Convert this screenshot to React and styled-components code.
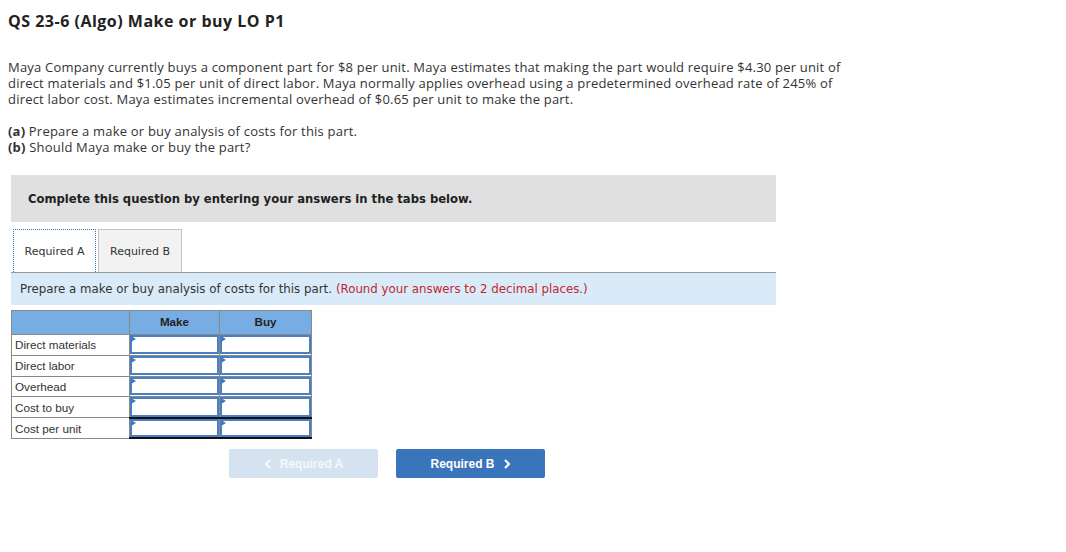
import React from "react";
import styled, { createGlobalStyle } from "styled-components";

const Global = createGlobalStyle`
  body { margin: 0; background: #fff; }
  * { box-sizing: border-box; }
`;

const Page = styled.div`
  padding: 11px 8px 40px 8px;
  font-family: "Open Sans", "Liberation Sans", sans-serif;
  color: #333;
  width: 1066px;
`;

const Title = styled.h1`
  margin: 0;
  font-size: 16px;
  letter-spacing: 0.5px;
  font-weight: 700;
  color: #222;
  line-height: 20px;
`;

const Para = styled.p`
  margin: ${(p) => p.$top || 0}px 0 0 0;
  font-size: 13px;
  letter-spacing: 0.2px;
  line-height: 16px;
  white-space: nowrap;
`;

const Bold = styled.b`
  font-weight: 700;
`;

const Section = styled.div`
  margin: 20px 0 0 3px;
  width: 765px;
  font-family: Verdana, "DejaVu Sans", sans-serif;
`;

const Banner = styled.div`
  background: #e0e0e0;
  height: 47px;
  display: flex;
  align-items: center;
  padding-left: 17px;
  font-size: 11.6px;
  font-weight: 700;
  color: #222;
`;

const Tabs = styled.div`
  display: flex;
  gap: 2px;
  margin-top: 7px;
  padding-left: 2px;
  border-bottom: 1px solid #999;
`;

const Tab = styled.div`
  width: ${(p) => p.$w}px;
  height: 43px;
  display: flex;
  align-items: center;
  justify-content: center;
  font-size: 11px;
  color: #333;
  background: ${(p) => (p.$active ? "#fff" : "#f2f2f2")};
  border: 1px ${(p) => (p.$active ? "dotted #3a6fb5" : "solid #c4c4c4")};
  border-bottom: none;
  margin-bottom: ${(p) => (p.$active ? "-1px" : "0")};
`;

const Instr = styled.div`
  background: #d9ebf9;
  height: 32px;
  display: flex;
  align-items: center;
  padding-left: 9px;
  font-size: 11.8px;
  color: #333;
`;

const Red = styled.span`
  color: #c4262e;
  margin-left: 4px;
`;

const Table = styled.table`
  margin-top: 5px;
  border-collapse: collapse;
  font-family: Arial, "Liberation Sans", sans-serif;
  font-size: 11.7px;
  color: #222;
`;

const Th = styled.th`
  background: #78ade4;
  border: 1px solid #888;
  height: 24px;
  width: ${(p) => p.$w}px;
  font-weight: 700;
  padding: 0 0 2px 0;
  color: #222;
  text-align: center;
`;

const Label = styled.td`
  border: 1px solid #888;
  height: 20.8px;
  padding: 0 3px;
  white-space: nowrap;
  color: #333;
`;

const InputCell = styled.td`
  border: 1px solid #888;
  border-bottom: ${(p) => (p.$total ? "2px solid #111" : "1px solid #888")};
  padding: 0;
  height: 20.8px;
  position: relative;
`;

const Field = styled.div`
  position: absolute;
  inset: 0 0 ${(p) => (p.$total ? "0" : "1px")} 0;
  border: 2px solid #4a7fc1;
  background: #fff;
  &::before {
    content: "";
    position: absolute;
    left: -1px;
    top: -1px;
    border-left: 5px solid #3b78c8;
    border-top: 3px solid transparent;
    border-bottom: 3px solid transparent;
  }
`;

const Nav = styled.div`
  display: flex;
  gap: 18px;
  margin: 10px 0 0 218px;
`;

const NavBtn = styled.div`
  width: 149px;
  height: 29px;
  border-radius: 2px;
  display: flex;
  align-items: center;
  justify-content: center;
  gap: 8px;
  font-family: Arial, "Liberation Sans", sans-serif;
  font-size: 12px;
  font-weight: 700;
  background: ${(p) => (p.$disabled ? "#d5e3f1" : "#3a75bb")};
  color: ${(p) => (p.$disabled ? "#f4f8fc" : "#fff")};
`;

const Chevron = ({ dir }) => (
  <svg width="8" height="10" viewBox="0 0 8 10">
    <path
      d={dir === "left" ? "M6 1 L2 5 L6 9" : "M2 1 L6 5 L2 9"}
      fill="none"
      stroke="currentColor"
      strokeWidth="2"
    />
  </svg>
);

const rows = [
  ["Direct materials", false],
  ["Direct labor", false],
  ["Overhead", false],
  ["Cost to buy", true],
  ["Cost per unit", true],
];

export default function App() {
  return (
    <Page>
      <Global />
      <Title>QS 23-6 (Algo) Make or buy LO P1</Title>
      <Para $top={28}>
        Maya Company currently buys a component part for $8 per unit. Maya
        estimates that making the part would require $4.30 per unit of
        <br />
        direct materials and $1.05 per unit of direct labor. Maya normally
        applies overhead using a predetermined overhead rate of 245% of
        <br />
        direct labor cost. Maya estimates incremental overhead of $0.65 per
        unit to make the part.
      </Para>
      <Para $top={16}>
        <Bold>(a)</Bold> Prepare a make or buy analysis of costs for this part.
        <br />
        <Bold>(b)</Bold> Should Maya make or buy the part?
      </Para>
      <Section>
        <Banner>
          Complete this question by entering your answers in the tabs below.
        </Banner>
        <Tabs>
          <Tab $active $w={83}>
            Required A
          </Tab>
          <Tab $w={84}>Required B</Tab>
        </Tabs>
        <Instr>
          Prepare a make or buy analysis of costs for this part.
          <Red>(Round your answers to 2 decimal places.)</Red>
        </Instr>
        <Table>
          <thead>
            <tr>
              <Th $w={118}></Th>
              <Th $w={90}>Make</Th>
              <Th $w={92}>Buy</Th>
            </tr>
          </thead>
          <tbody>
            {rows.map(([label, total]) => (
              <tr key={label}>
                <Label>{label}</Label>
                <InputCell $total={total}>
                  <Field $total={total} />
                </InputCell>
                <InputCell $total={total}>
                  <Field $total={total} />
                </InputCell>
              </tr>
            ))}
          </tbody>
        </Table>
        <Nav>
          <NavBtn $disabled>
            <Chevron dir="left" />
            Required A
          </NavBtn>
          <NavBtn>
            Required B
            <Chevron dir="right" />
          </NavBtn>
        </Nav>
      </Section>
    </Page>
  );
}
